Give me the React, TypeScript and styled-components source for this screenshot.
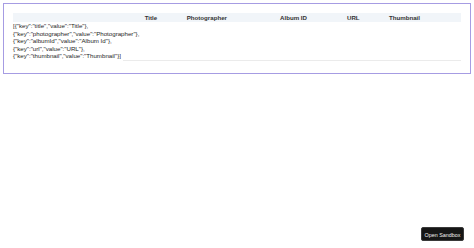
import React from "react";
import styled, { createGlobalStyle } from "styled-components";

const Global = createGlobalStyle`
  html, body { margin: 0; padding: 0; background: #ffffff; }
  body { font-family: "Liberation Sans", Arial, sans-serif; }
`;

const Frame = styled.div`
  margin: 3px;
  border: 1px solid #a69ce3;
  padding: 9px 9px 12px 9px;
  width: 448px;
  box-sizing: content-box;
`;

const Table = styled.table`
  width: 448px;
  border-collapse: collapse;
  table-layout: fixed;
  font-family: "Liberation Sans", Arial, sans-serif;
  font-size: 6.15px;
  line-height: 7.4px;
`;

const HeadRow = styled.tr`
  background: #f1f5f9;
`;

const Th = styled.th<{ $pad: number }>`
  padding: 0.6px 0 0.6px ${(p) => p.$pad}px;
  text-align: left;
  font-weight: 700;
  color: #333333;
  white-space: nowrap;
`;

const Td = styled.td<{ $line?: boolean }>`
  padding: 0.9px 0 0 0;
  vertical-align: top;
  color: #1e1e1e;
  overflow: visible;
  border-bottom: ${(p) => (p.$line ? "1px solid #ebebeb" : "1px solid transparent")};
`;

const Json = styled.div`
  white-space: pre;
  overflow: visible;
`;

const SandboxButton = styled.button`
  position: fixed;
  right: 10px;
  bottom: 7px;
  width: 43px;
  height: 14px;
  padding: 0;
  border: 0.5px solid #3a3a3a;
  border-radius: 2px;
  background: #161616;
  color: #f2f2f2;
  font-family: "Liberation Sans", Arial, sans-serif;
  font-size: 5.4px;
  line-height: 14px;
  text-align: center;
  cursor: pointer;
`;

const columns = [
  { key: "title", value: "Title" },
  { key: "photographer", value: "Photographer" },
  { key: "albumId", value: "Album ID" },
  { key: "url", value: "URL" },
  { key: "thumbnail", value: "Thumbnail" },
];

const jsonColumns = [
  { key: "title", value: "Title" },
  { key: "photographer", value: "Photographer" },
  { key: "albumId", value: "Album Id" },
  { key: "url", value: "URL" },
  { key: "thumbnail", value: "Thumbnail" },
];

const widths = [110, 61.7, 93.3, 67, 42, 74];
const pads = [0, 21.7, 2, 2, 2, 2];

export default function App() {
  const text = JSON.stringify(jsonColumns).replace(/\},\{/g, "},\n{");
  return (
    <>
      <Global />
      <Frame>
        <Table>
          <colgroup>
            {widths.map((w, i) => (
              <col key={i} style={{ width: `${w}px` }} />
            ))}
          </colgroup>
          <thead>
            <HeadRow>
              <Th $pad={pads[0]} />
              {columns.map((c, i) => (
                <Th key={c.key} $pad={pads[i + 1]}>
                  {c.value}
                </Th>
              ))}
            </HeadRow>
          </thead>
          <tbody>
            <tr>
              <Td>
                <Json>{text}</Json>
              </Td>
              {columns.map((c) => (
                <Td key={c.key} $line />
              ))}
            </tr>
          </tbody>
        </Table>
      </Frame>
      <SandboxButton type="button">Open Sandbox</SandboxButton>
    </>
  );
}
